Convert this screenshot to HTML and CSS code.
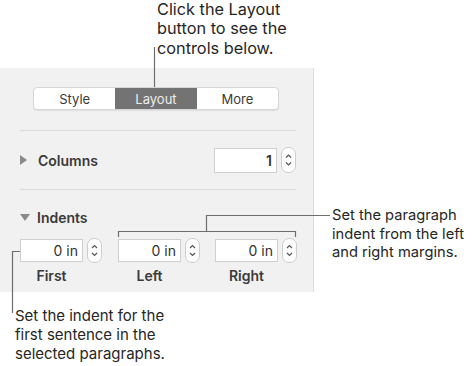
FILE: index.html
```html
<!DOCTYPE html>
<html lang="en">
<head>
    <meta charset="UTF-8">
    <title>Layout Controls</title>
    <link rel="stylesheet" href="styles.css">
</head>
<body>
    <div class="stage">
        <div class="panel">
            <div class="tabs">
                <div class="tab">Style</div>
                <div class="tab active">Layout</div>
                <div class="tab">More</div>
            </div>

            <div class="divider"></div>

            <div class="row">
                <div class="disclosure">
                    <span class="arrow right"></span>
                    <span class="section-title">Columns</span>
                </div>
                <div class="field-group">
                    <div class="field">1</div>
                    <div class="stepper">
                        <svg width="13" height="24" viewBox="0 0 13 24"><path d="M4 9.5 L6.5 7 L9 9.5 M4 14.5 L6.5 17 L9 14.5" fill="none" stroke="#555" stroke-width="1.2"/></svg>
                    </div>
                </div>
            </div>

            <div class="divider second"></div>

            <div class="disclosure indents">
                <span class="arrow down"></span>
                <span class="section-title">Indents</span>
            </div>

            <div class="indent-grid">
                <div class="indent">
                    <div class="field-group">
                        <div class="field">0 in</div>
                        <div class="stepper">
                            <svg width="13" height="23" viewBox="0 0 13 23"><path d="M4 9 L6.5 6.5 L9 9 M4 14 L6.5 16.5 L9 14" fill="none" stroke="#555" stroke-width="1.2"/></svg>
                        </div>
                    </div>
                    <div class="indent-label">First</div>
                </div>
                <div class="indent">
                    <div class="field-group">
                        <div class="field">0 in</div>
                        <div class="stepper">
                            <svg width="13" height="23" viewBox="0 0 13 23"><path d="M4 9 L6.5 6.5 L9 9 M4 14 L6.5 16.5 L9 14" fill="none" stroke="#555" stroke-width="1.2"/></svg>
                        </div>
                    </div>
                    <div class="indent-label">Left</div>
                </div>
                <div class="indent">
                    <div class="field-group">
                        <div class="field">0 in</div>
                        <div class="stepper">
                            <svg width="13" height="23" viewBox="0 0 13 23"><path d="M4 9 L6.5 6.5 L9 9 M4 14 L6.5 16.5 L9 14" fill="none" stroke="#555" stroke-width="1.2"/></svg>
                        </div>
                    </div>
                    <div class="indent-label">Right</div>
                </div>
            </div>
        </div>

        <!-- callout leader lines -->
        <svg class="leaders" width="474" height="366" viewBox="0 0 474 366">
            <g fill="none" stroke="#6e6e6e" stroke-width="1.2">
                <path d="M154.5 47 V87"/>
                <path d="M118.5 237 V231.5 H295.5 V237"/>
                <path d="M206.5 231.5 V215.5 H330"/>
                <path d="M20 251.5 H12.5 V313"/>
            </g>
        </svg>

        <div class="callout top">Click the Layout<br>button to see the<br>controls below.</div>
        <div class="callout right">Set the paragraph<br>indent from the left<br>and right margins.</div>
        <div class="callout bottom">Set the indent for the<br>first sentence in the<br>selected paragraphs.</div>
    </div>
</body>
</html>
```

FILE: styles.css
```css
body {
    margin: 0;
    font-family: 'Inter', 'Liberation Sans', sans-serif;
    color: #222;
    background: #fff;
}

.stage {
    position: relative;
    width: 474px;
    height: 366px;
    overflow: hidden;
}

.panel {
    margin-top: 68px;
    width: 314px;
    height: 224px;
    background-color: #f1f1f1;
    border-right: 1px solid #dcdcdc;
    padding-top: 19px;
    box-sizing: border-box;
    color: #333;
}

.tabs {
    display: flex;
    margin-left: 33px;
    width: 246px;
    height: 23px;
    border: 1px solid #d6d6d6;
    border-radius: 4px;
    background: #fff;
    box-sizing: border-box;
    box-shadow: 0 1px 1px rgba(0, 0, 0, 0.08);
    overflow: hidden;
}

.tab {
    flex: 1;
    display: flex;
    align-items: center;
    justify-content: center;
    font-size: 13px;
    color: #3a3a3a;
}

.tab.active {
    background-color: #737373;
    color: #ededed;
}

.divider {
    margin: 20px 17px 0 20px;
    height: 1px;
    background-color: #dadada;
}

.divider.second {
    margin-top: 16px;
}

.row {
    display: flex;
    align-items: center;
    justify-content: space-between;
    margin: 16px 17px 0 20px;
}

.disclosure {
    display: flex;
    align-items: center;
}

.disclosure.indents {
    margin: 19px 0 0 20px;
}

.arrow {
    width: 0;
    height: 0;
    margin-right: 11px;
}

.arrow.right {
    border-top: 5px solid transparent;
    border-bottom: 5px solid transparent;
    border-left: 7px solid #8a8a8a;
}

.arrow.down {
    border-left: 5px solid transparent;
    border-right: 5px solid transparent;
    border-top: 7px solid #8a8a8a;
    margin-right: 7px;
}

.section-title {
    font-size: 14px;
    font-weight: 600;
    color: #3a3a3a;
}

.field-group {
    display: flex;
    align-items: center;
    gap: 4px;
}

.field {
    width: 63px;
    height: 25px;
    box-sizing: border-box;
    background: #fff;
    border: 1px solid #cfcfcf;
    text-align: right;
    padding-right: 4px;
    font-size: 14px;
    line-height: 23px;
    color: #333;
}

.row .field {
    font-weight: 600;
}

.stepper {
    width: 13px;
    height: 24px;
    background: #fff;
    border: 1px solid #cdcdcd;
    border-radius: 7px;
    display: flex;
    align-items: center;
    justify-content: center;
}

.stepper svg {
    display: block;
}

.indent-grid {
    display: grid;
    grid-template-columns: 98px 97px 97px;
    margin: 12px 0 0 20px;
}

.indent .field {
    height: 23px;
    line-height: 21px;
}

.indent .stepper {
    height: 23px;
}

.indent-label {
    width: 63px;
    text-align: center;
    font-size: 14px;
    font-weight: 600;
    color: #3a3a3a;
    margin-top: 4px;
}

.leaders {
    position: absolute;
    top: 0;
    left: 0;
}

.callout {
    position: absolute;
    font-size: 15px;
    line-height: 19px;
    color: #262626;
}

.callout.top {
    left: 157px;
    top: 0;
    font-size: 16.3px;
    line-height: 19.3px;
}

.callout.right {
    left: 332px;
    top: 206px;
    font-size: 14.7px;
    line-height: 18.5px;
}

.callout.bottom {
    left: 15px;
    top: 306px;
}
```
